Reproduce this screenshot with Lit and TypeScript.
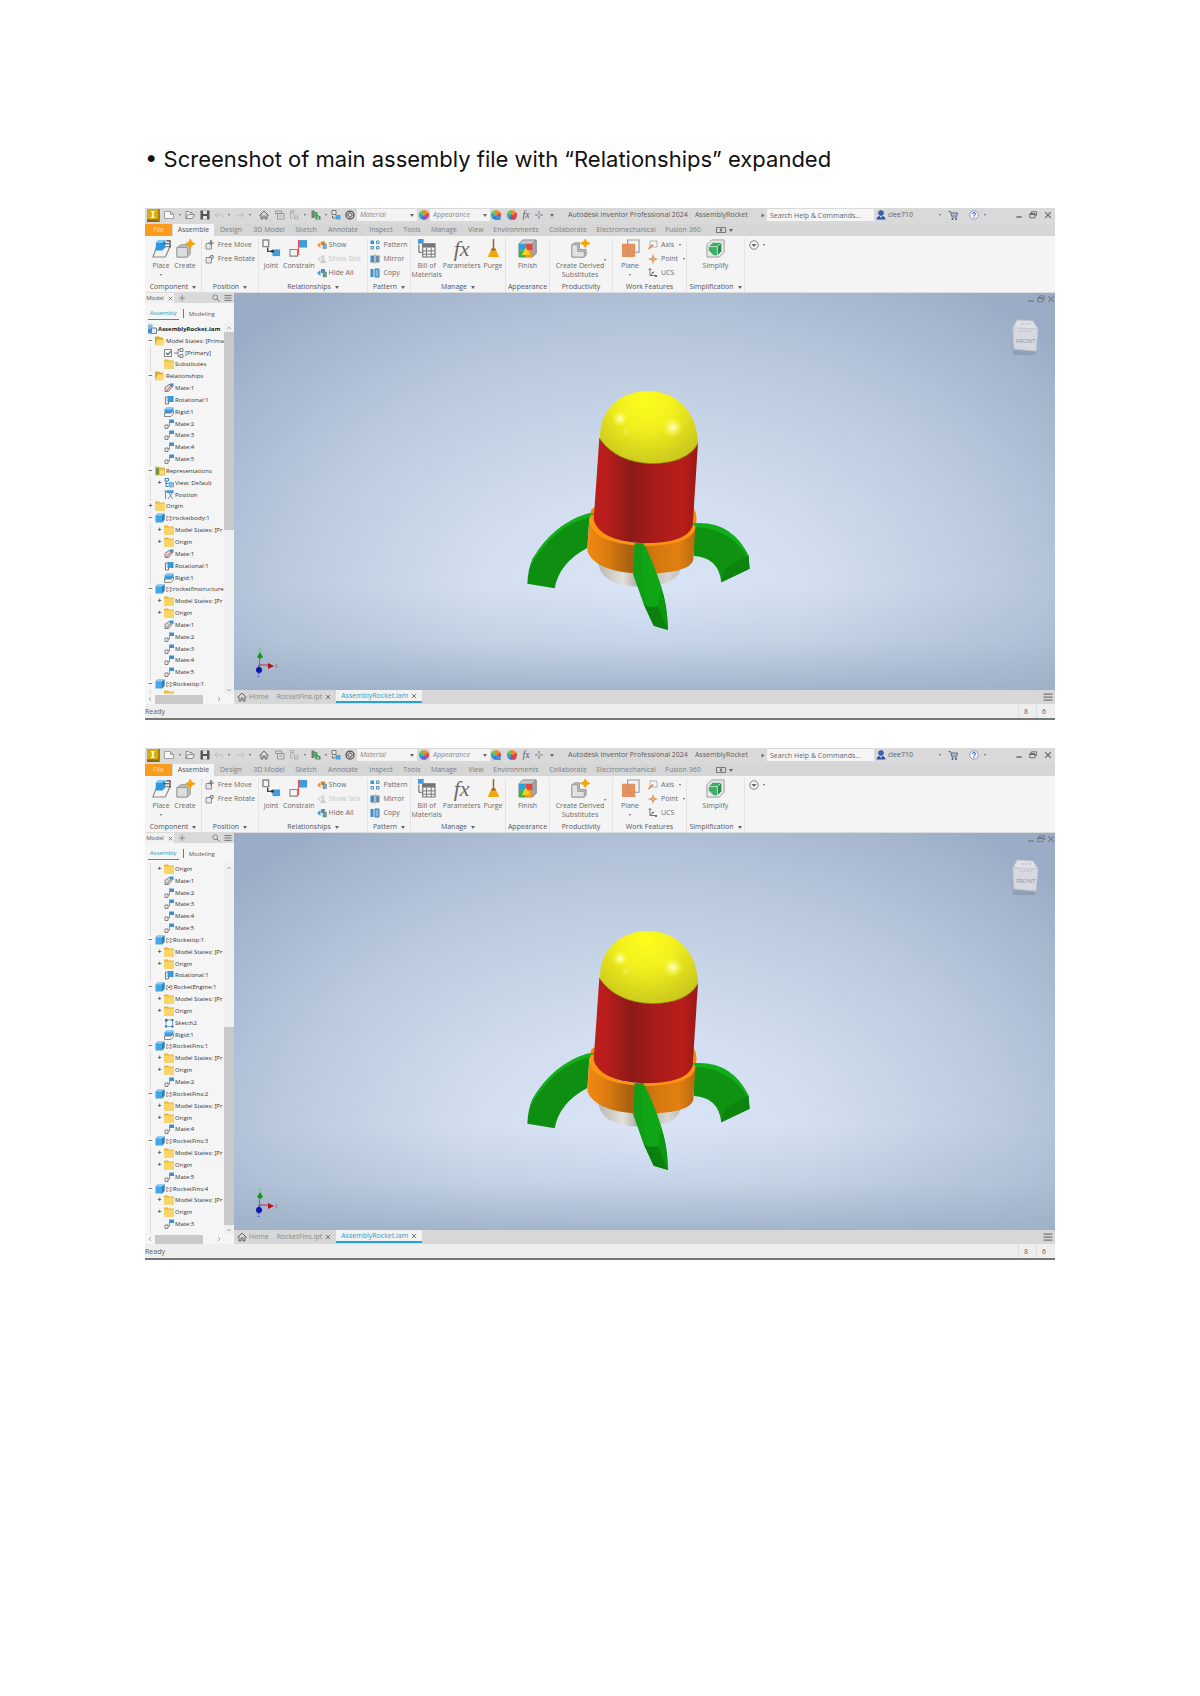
import { LitElement, html, svg, css, nothing } from "lit";
import { customElement, property } from "lit/decorators.js";
import { classMap } from "lit/directives/class-map.js";

type Row = { level: number; icon: string; text: string; open?: boolean; closed?: boolean; bold?: boolean; check?: boolean };

/* ---------- icon artwork, each drawn on a 20 x 20 grid ---------- */
const wheel = svg`
  <path d="M10 10V0A10 10 0 0 1 18.700 5z" fill="#f08a2c"/>
  <path d="M10 10 18.700 5A10 10 0 0 1 18.700 15z" fill="#e8443a"/>
  <path d="M10 10 18.700 15A10 10 0 0 1 10 20z" fill="#9b4fc0"/>
  <path d="M10 10V20A10 10 0 0 1 1.300 15z" fill="#2f7fe0"/>
  <path d="M10 10 1.300 15A10 10 0 0 1 1.300 5z" fill="#27b3a2"/>
  <path d="M10 10 1.300 5A10 10 0 0 1 10 0z" fill="#7ac143"/>`;
const cubeBlue = svg`
  <path d="M1 5 5 1H19V14L14 19H1z" fill="#45a6e6"/>
  <path d="M1 5 5 1H19L14 5z" fill="#8ccbf2"/>
  <path d="M14 5 19 1V14L14 19z" fill="#2c82c2"/>`;
const art: Record<string, unknown> = {
  logo: svg`<path d="M0 0H20V20H0z" fill="#d9ab10"/><path d="M0 16H20V20H0z" fill="#8b6b08"/><path d="M17 0H20V20H17z" fill="#a88308"/><path d="M6 3H12V5H10.500V12H12V14H6V12H7.500V5H6z" fill="#fff6cf"/>`,
  doc: svg`<path d="M1 3H13L19 9V17H1zM13 3V9H19" fill="#fafafa" stroke="#888" stroke-width="1.500"/>`,
  open: svg`<path d="M2 17V3H7L9 5H14V9M2 17 6 9H19L15 17z" fill="#eee" stroke="#777" stroke-width="1.600"/>`,
  save: svg`<path d="M1 1H19V19H1z" fill="#555"/><path d="M6 1H14V8H6zM6 12H14V19H6z" fill="#e4e4e4"/>`,
  undo: svg`<path d="M7 5 2 10 7 15M2 10H14Q18 10 18 14" fill="none" stroke="#bdbdbd" stroke-width="2"/>`,
  redo: svg`<path d="M13 5 18 10 13 15M18 10H6Q2 10 2 14" fill="none" stroke="#bdbdbd" stroke-width="2"/>`,
  home: svg`<path d="M1 11 10 2 19 11M4 9V18H8V12H12V18H16V9" fill="none" stroke="#666" stroke-width="2"/>`,
  sheets: svg`<path d="M1 2H13V7H1zM5 7H18V18H5z" fill="#ddd" stroke="#888" stroke-width="1.600"/><path d="M8 12H15" stroke="#888" stroke-width="1.500"/>`,
  branch: svg`<path d="M3 1H10V5H3zM3 5V16H8M11 12H18V18H11zM6 6 12 12" fill="none" stroke="#aaa" stroke-width="1.800"/>`,
  update: svg`<path d="M1 1H7V16H1z" fill="#777"/><path d="M5 4H13V13H5z" fill="#55a868"/><path d="M11 9 19 13V19H9V13z" fill="#3a9151"/><path d="M14 13V18" stroke="#fff" stroke-width="2"/>`,
  select: svg`<path d="M2 1H10V9H2z" fill="#eee" stroke="#777" stroke-width="2"/><path d="M9 10H19V19H9z" fill="#4ca3df"/><path d="M3 12V16H8" fill="none" stroke="#666" stroke-width="2"/>`,
  gear: svg`<circle cx="10" cy="10" r="8" fill="none" stroke="#555" stroke-width="2.500"/><circle cx="10" cy="10" r="4" fill="none" stroke="#666" stroke-width="2"/><path d="M10 2V6M10 14V18M2 10H6M14 10H18" stroke="#666" stroke-width="1.500"/>`,
  wheel,
  wheelBlue: svg`${wheel}<path d="M10 11H19V20H10z" fill="#3c8fd8"/>`,
  wheelRed: svg`${wheel}<path d="M8 8 19 16 15 20 7 13z" fill="#e23b30"/>`,
  plus: svg`<path d="M10 2V18M2 10H18" stroke="#999" stroke-width="3"/><circle cx="10" cy="10" r="2" fill="#ddd"/>`,
  user: svg`<circle cx="10" cy="6" r="5" fill="#3f63b5" stroke="#233f80"/><path d="M1 19Q2 11 10 12Q18 11 19 19z" fill="#2f51a3"/><path d="M8 12H12L10 17z" fill="#dfe6f7"/>`,
  cart: svg`<path d="M1 3H5L8 14H17L19 6H6" fill="#d5dcea" stroke="#5a6b8c" stroke-width="2"/><path d="M7 8H18M8 11H17" stroke="#5a6b8c"/><circle cx="9" cy="18" r="2" fill="#43577d"/><circle cx="16" cy="18" r="2" fill="#43577d"/>`,
  help: svg`<circle cx="10" cy="10" r="8.500" fill="#f3f6fb" stroke="#7487ad" stroke-width="1.500"/><path d="M7 8Q7 5 10 5Q13 5 13 8Q13 9.500 10 11V13" fill="none" stroke="#2f5fc0" stroke-width="2"/><circle cx="10" cy="15" r="1.200" fill="#2f5fc0"/>`,
  min: svg`<path d="M3 15H17" stroke="#555" stroke-width="3"/>`,
  restore: svg`<path d="M6 6V2H19V11H15M2 7H15V17H2z" fill="none" stroke="#555" stroke-width="2"/><path d="M2 8H15" stroke="#555" stroke-width="3"/>`,
  close: svg`<path d="M3 3 17 17M17 3 3 17" stroke="#666" stroke-width="3"/>`,
  add: svg`<path d="M10 3V17M3 10H17" stroke="#888" stroke-width="2.500"/>`,
  find: svg`<circle cx="8" cy="8" r="6" fill="none" stroke="#777" stroke-width="2"/><path d="M12 12 19 19" stroke="#777" stroke-width="2.500"/>`,
  menu: svg`<path d="M1 4H19M1 10H19M1 16H19" stroke="#777" stroke-width="2.500"/>`,
  camera: svg`<path d="M1 5H19V15H1z" fill="none" stroke="#777" stroke-width="2"/><path d="M10 5V15" stroke="#777" stroke-width="1.500"/><circle cx="10" cy="10" r="2.500" fill="#777"/>`,
  roundDown: svg`<circle cx="10" cy="10" r="8.500" fill="none" stroke="#777" stroke-width="1.800"/><path d="M5 8H15L10 14z" fill="#666"/>`,
  place: svg`<path d="M5 8H19L14 19H1z" fill="#f4f4f4" stroke="#888" stroke-width="1.200"/><path d="M4 4 7 1H14V9L11 12H4z" fill="#2f97dd"/><path d="M4 4 7 1H14L11 4z" fill="#84c8f1"/><path d="M15 2H19V9M12 5H18" stroke="#444" fill="none" stroke-width="1.300"/>`,
  create: svg`<path d="M1 9 5 6H15V16L12 19H1z" fill="#bdbdbd" stroke="#999"/><path d="M1 9H12V19H1z" fill="#dedede" stroke="#999"/><path d="M15 0 16.500 3.500 20 5 16.500 6.500 15 10 13.500 6.500 10 5 13.500 3.500z" fill="#f5a400" stroke="#f5a400"/>`,
  move: svg`<path d="M2 7H13V18H2z" fill="#e6e6e6" stroke="#888" stroke-width="1.800"/><path d="M12 1V11M7 6H18" stroke="#666" stroke-width="2"/><path d="M9 3 12 0 15 3z" fill="#666"/>`,
  rotate: svg`<path d="M2 7H13V18H2z" fill="#e6e6e6" stroke="#888" stroke-width="1.800"/><path d="M9 8Q9 2 16 3Q18 8 13 11" fill="none" stroke="#666" stroke-width="2"/>`,
  joint: svg`<path d="M1 1H7V8H1z" fill="#f4f4f4" stroke="#888" stroke-width="1.500"/><path d="M6 9V13H11" fill="none" stroke="#444" stroke-width="1.500"/><path d="M11 11H19V18H11z" fill="#3f9ddd"/><circle cx="11" cy="13" r="1.600" fill="#333"/>`,
  constrain: svg`<path d="M10 1H19V9H10z" fill="#3f9ddd"/><path d="M1 11H9V18H1z" fill="#f4f4f4" stroke="#888" stroke-width="1.200"/><path d="M10 1V17" stroke="#e8504f" stroke-width="1.200"/>`,
  show: svg`<path d="M0 10 7 4V16z" fill="#e99a3c"/><path d="M8 3H16V10H8z" fill="#d8852d"/><path d="M12 8H19V17H12z" fill="#68aedc" stroke="#777"/>`,
  sick: svg`<path d="M0 10 7 4V16z" fill="#ddd"/><path d="M8 3H15V9H8z" fill="#d5d5d5"/><path d="M12 8 19 18H6z" fill="#ccc"/>`,
  hide: svg`<path d="M0 10 7 4V16z" fill="#3f9ddd"/><path d="M8 2H16V10H8z" fill="#5b8fb5"/><path d="M12 8H19V18H12z" fill="#57a6a6" stroke="#777"/>`,
  pattern: svg`<path d="M1 1H8V8H1z" fill="#2f97dd"/><path d="M13 2H18V7H13zM2 13H7V18H2zM13 13H18V18H13z" fill="#eee" stroke="#4b8fc0" stroke-width="2"/>`,
  mirror: svg`<path d="M1 3H8V17H1z" fill="#3f8fc7"/><path d="M10 1V19" stroke="#555" stroke-width="1.500"/><path d="M12 3H19V17H12z" fill="#6b8eab"/>`,
  copy: svg`<path d="M1 2H7V18H1z" fill="#3f8fc7"/><path d="M10 2H18V18H10z" fill="#8db9d9" stroke="#2e7fb8" stroke-width="2"/>`,
  bom: svg`<path d="M6 5H19V19H6z" fill="#f1f1f1" stroke="#777" stroke-width="1.200"/><path d="M6 5H19V9H6z" fill="#777"/><path d="M6 12.500H19M6 16H19M10 9V19M15 9V19" stroke="#777"/><path d="M1 0H7V5H1z" fill="#3f9ddd"/><path d="M2 6V14H5" fill="none" stroke="#555"/>`,
  purge: svg`<path d="M10 0V10" stroke="#9a6530" stroke-width="1.600"/><path d="M8 10H12L16 19H4z" fill="#f2a70a"/><path d="M8 10H12V12H8z" fill="#7a5a3a"/>`,
  finish: svg`<path d="M1 5 5 1H19V15L15 19H1z" fill="#c9c9c9" stroke="#888"/><path d="M15 5 19 1V15L15 19z" fill="#a9a9a9" stroke="#888"/><path d="M1 5H8V12H1z" fill="#27a6de"/><path d="M8 5H15V12H8z" fill="#e5483c"/><path d="M1 12H8V19H1z" fill="#3bb34b"/><path d="M8 12H15V19H8z" fill="#f59a1f"/><path d="M4 17 8 9 13 16z" fill="#f7d21b"/>`,
  derived: svg`<path d="M1 6 4 4H9V11H16V17L14 19H1z" fill="#bdbdbd" stroke="#999"/><path d="M1 6H7V13H14V19H1z" fill="#e2e2e2" stroke="#999"/><path d="M15 0 16.500 3 20 4.500 16.500 6 15 9 13.500 6 10 4.500 13.500 3z" fill="#f5a400" stroke="#f5a400"/>`,
  plane: svg`<path d="M7 1H19V14H7z" fill="none" stroke="#999" stroke-width="1.200"/><path d="M1 5H15V19H1z" fill="#df8a55" opacity=".92"/>`,
  axis: svg`<path d="M4 2H18V14H4z" fill="none" stroke="#aaa" stroke-width="1.800"/><path d="M1 18 10 9" stroke="#df7d3f" stroke-width="3"/>`,
  point: svg`<path d="M10 1V19M1 10H19" stroke="#df8a4f" stroke-width="1.800"/><path d="M10 5 15 10 10 15 5 10z" fill="#f0b184" stroke="#cf6f2f" stroke-width="1.500"/>`,
  ucs: svg`<path d="M4 1V15H18M4 15 12 7M1 4 4 1 7 4" fill="none" stroke="#666" stroke-width="1.800"/><path d="M8 8H11V11H8zM14 14H18V18H14z" fill="#666"/>`,
  simplify: svg`<path d="M1 6 6 1H19V14L14 19H1z" fill="#e9e9e9" stroke="#999"/><path d="M3 8 7 4H16V13L12 17H8L3 12z" fill="#3cae66"/><path d="M12 8 16 4V13L12 17z" fill="#2b8c4e"/><path d="M3 8H12V17M12 8 16 4" fill="none" stroke="#bfe6cc"/>`,
  iam: svg`<path d="M2 1H11V9H2z" fill="#8ab8da"/><path d="M2 9H9V19H2z" fill="#3f8fc7"/><path d="M9 8H19V19H9z" fill="#dfe9f1" stroke="#5e88aa" stroke-width="2"/>`,
  folder: svg`<path d="M0 1H8L10 3H20V19H0z" fill="#e9b83a"/><path d="M0 5H20V19H0z" fill="#f8d566"/>`,
  folderOpen: svg`<path d="M0 1H8L10 3H16V18H0z" fill="#dba92e"/><path d="M5 7H20L16 19H0z" fill="#fbd96c"/>`,
  reps: svg`<path d="M0 1H8L10 3H20V19H0z" fill="#e0bd45"/><path d="M2 4H8V17H2z" fill="#7c8b45"/><path d="M9 9H18V17H9z" fill="#f3dd8a"/>`,
  states: svg`<path d="M0 10H8M8 10V3H12M8 10V17H12" fill="none" stroke="#777" stroke-width="1.800"/><path d="M12 1H18V7H12zM12 13H18V19H12z" fill="#eee" stroke="#777" stroke-width="1.800"/>`,
  mateAxis: svg`<path d="M2 9 10 3H14L18 6 9 17H2z" fill="#d9d9d9" stroke="#777" stroke-width="1.800"/><path d="M12 1H19V7H12z" fill="#3f8fd0"/><path d="M5 16 14 6" stroke="#de5b5b" stroke-width="2"/>`,
  mate: svg`<path d="M12 1H20V8H12z" fill="#3f8fd0"/><path d="M11 1V14H8" fill="none" stroke="#e86a6a" stroke-width="2"/><path d="M2 12H8V19H2z" fill="#f5f5f5" stroke="#777" stroke-width="1.800"/>`,
  rotational: svg`<path d="M7 2H19V14H7z" fill="#2f93d8"/><path d="M7 4H3V18H9V14" fill="none" stroke="#777" stroke-width="2"/><path d="M12 2V14" stroke="#7cc4f0" stroke-width="1"/>`,
  rigid: svg`<path d="M1 5 5 1H19V8L14 12H1z" fill="#3a9fe2"/><path d="M1 5 5 1H19L15 5z" fill="#8bcdf3"/><path d="M1 12H14L19 8V13L14 19H1z" fill="#f5f5f5" stroke="#666" stroke-width="1.500"/>`,
  part: cubeBlue,
  view: svg`<path d="M2 1H9V6H2zM4 6V17H9M4 11H9" fill="none" stroke="#3b87bd" stroke-width="2"/><path d="M10 9H19V18H10z" fill="#8cbfe2" stroke="#3b87bd"/>`,
  position: svg`<path d="M1 2H19M3 2V18M10 5 17 18M17 5 8 18" fill="none" stroke="#6d8da6" stroke-width="2"/><path d="M5 1H19V6H5z" fill="#4b9bd2"/>`,
  sketch: svg`<path d="M4 4H17V17H4z" fill="#f7f7f7" stroke="#3f8fd0" stroke-width="1.500"/><path d="M2 2H7V7H2zM15 2H19V6H15zM15 15H19V19H15zM2 15H6V19H2z" fill="#3a6f99"/>`,
};
const icon = (name: string, cls = "i10") => svg`<svg class=${cls} viewBox="0 0 20 20" aria-hidden="true">${art[name]}</svg>`;
const caret = html`<span class="caret"></span>`;

@customElement("model-scene")
class ModelScene extends LitElement {
  static styles = css`
    :host { display: block; height: 100%; overflow: hidden;
      background:
        linear-gradient(to bottom, rgba(159,178,200,0) 74%, rgba(157,176,199,.3) 88%, rgba(155,174,197,.85) 100%),
        radial-gradient(ellipse 68% 100% at 50% 80%, #dae5f7 0%, #d3dff0 30%, #bac9dd 66%, #9badc6 100%);
    }
    .scene { display: block; width: 100%; height: 100%; font-family: "Open Sans", sans-serif; }
    .face { font-size: 6px; fill: #8f949c; }
    .axis { font-size: 5px; }
  `;
  render() {
    return html`<svg class="scene" viewBox="0 0 821 397" preserveAspectRatio="xMidYMid meet" role="img" aria-label="Rocket assembly">
      <defs>
        <linearGradient id="red"><stop offset="0" stop-color="#bd1d1d"/><stop offset=".12" stop-color="#b81e1c"/><stop offset=".36" stop-color="#8d1a16"/><stop offset=".6" stop-color="#a91b18"/><stop offset=".85" stop-color="#b71e1a"/><stop offset="1" stop-color="#9b1815"/></linearGradient>
        <linearGradient id="ring"><stop offset="0" stop-color="#f28a12"/><stop offset=".2" stop-color="#d97a0f"/><stop offset=".4" stop-color="#a75f10"/><stop offset=".62" stop-color="#d3770f"/><stop offset=".85" stop-color="#e27f10"/><stop offset="1" stop-color="#b86a10"/></linearGradient>
        <radialGradient id="dome" gradientUnits="userSpaceOnUse" cx="440" cy="90" r="210"><stop offset="0" stop-color="#fdfd1c"/><stop offset=".4" stop-color="#f3f01e"/><stop offset=".75" stop-color="#d8d61c"/><stop offset="1" stop-color="#c6c41c"/></radialGradient>
        <radialGradient id="shine"><stop offset="0" stop-color="#fffff0"/><stop offset=".3" stop-color="#ffff9c" stop-opacity=".7"/><stop offset="1" stop-color="#ffff40" stop-opacity="0"/></radialGradient>
        <linearGradient id="nozzle"><stop offset="0" stop-color="#b9b7b3"/><stop offset=".3" stop-color="#e3e1dc"/><stop offset=".5" stop-color="#aaa7a0"/><stop offset=".85" stop-color="#d8d6d2"/><stop offset="1" stop-color="#c0beb9"/></linearGradient>
        <linearGradient id="shade" x2="0" y2="1"><stop offset="0" stop-color="#7e8ea8" stop-opacity="0"/><stop offset="1" stop-color="#7e8ea8" stop-opacity=".6"/></linearGradient>
      </defs>
      <g transform="translate(266 77) scale(.3333)">
        <path d="M272 436Q268 418 284 412H578Q594 430 588 462z" fill="#f0870f"/>
        <path d="M294 570Q296 648 420 650Q540 646 542 590z" fill="url(#nozzle)"/>
        <path d="M282 430 262 431Q160 462 98 566Q84 596 82 641L164 655Q178 578 262 534L268 446z" fill="#0f8f12"/>
        <path d="M282 430 262 431Q160 462 98 566L90 590Q160 468 268 442L282 441z" fill="#13b01c"/>
        <path d="M574 468 588 462Q690 462 742 550L749 596 664 637Q656 562 582 558z" fill="#0f920f"/>
        <path d="M574 468V460Q696 448 747 560L744 564Q690 474 582 470z" fill="#12ad1a"/>
        <path d="M749 596 746 556 676 594 664 637z" fill="#0d840d"/>
        <path d="M268 444Q276 520 430 522Q570 518 586 472L580 570Q570 610 425 612Q285 606 262 544z" fill="url(#ring)"/>
        <path d="M268 446Q276 424 284 440Q300 516 430 520Q566 514 580 462L587 470Q580 526 430 528Q270 520 268 446z" fill="#fb9413"/>
        <path d="M298 205 594 220 578 468Q560 520 430 520Q300 514 281 450z" fill="url(#red)"/>
        <path d="M300 208C298 110 370 62 446 63C532 64 594 130 594 222Q560 280 456 281Q350 278 300 208z" fill="url(#dome)"/>
        <path d="M298 205Q350 278 456 281Q560 280 594 220" fill="none" stroke="#8e7a14" stroke-width="2"/>
        <circle cx="360" cy="146" r="24" fill="url(#shine)"/><circle cx="518" cy="172" r="32" fill="url(#shine)"/><circle cx="378" cy="184" r="16" fill="url(#shine)" opacity=".35"/>
        <path d="M404 520H430Q452 560 470 610Q502 690 504 780L461 767 432 704 400 614z" fill="#10a516"/>
        <path d="M404 520 400 614 432 704 440 708Q420 600 430 520z" fill="#0e9413" opacity=".4"/>
        <path d="M432 704Q456 716 474 708L504 780 461 767z" fill="#0c800f"/>
        <path d="M474 708 484 654Q502 700 504 780z" fill="#0d970f"/>
      </g>
      <g>
        <path d="M777 44H805L801 62H779z" fill="url(#shade)"/>
        <path d="M783 27 799 28 804 36 779 35z" fill="#dde0e6" stroke="#c3c7ce"/>
        <path d="M779 35 804 36 802 58 780 56z" fill="#d6d9df" stroke="#c3c7ce"/>
        <text class="face" x="782" y="50">FRONT</text><path d="M787 31H797M785 38H798" stroke="#b9bdc5" stroke-dasharray="3 1"/>
      </g>
      <g>
        <path d="M25.500 372V364" stroke="#3a9a4a"/><path d="M25.500 372H34" stroke="#b3324a"/><path d="M25 372V377" stroke="#2020b0"/>
        <path d="M26 359 29 364 26 366 23 364z" fill="#0c9a1b"/><path d="M34 370 40 373 34 376z" fill="#b50f1f"/><circle cx="25" cy="377" r="3" fill="#0d12b0"/>
        <text class="axis" x="24" y="359" fill="#3cc94e">Y</text><text class="axis" x="41" y="375" fill="#e0394a">X</text><text class="axis" x="23" y="384" fill="#3a46e0">Z</text>
      </g>
    </svg>`;
  }
}

@customElement("inventor-window")
class InventorWindow extends LitElement {
  @property({ attribute: false }) rows: Row[] = [];
  @property({ type: Boolean }) scrolled = false;

  static styles = css`
    :host { display: block; font: 7px/10px "Open Sans", "Noto Sans", sans-serif; color: #5c5c5c; }
    * { box-sizing: border-box; }
    button, input, select { font: inherit; color: inherit; border: 0; padding: 0; margin: 0; background: none; min-width: 0; border-radius: 0; }
    button { display: flex; align-items: center; justify-content: center; white-space: nowrap; }
    a { color: inherit; text-decoration: none; }
    svg { flex: none; display: block; }
    .i5 { width: 5px; height: 5px; } .i8 { width: 8px; height: 8px; } .i10 { width: 10px; height: 10px; } .i12 { width: 13px; height: 13px; } .i20 { width: 19px; height: 19px; }
    .caret { flex: none; width: 0; height: 0; border: 2px solid transparent; border-top: 3px solid #666; border-bottom: 0; }
    .tiny { border-width: 1px; border-top-width: 2px; border-bottom: 0; }
    .side { transform: rotate(-90deg); }
    .win { display: flex; flex-direction: column; background: #f4f4f4; border-bottom: 2px solid #777; overflow: hidden; }

    .title { display: grid; height: 16px; align-items: center; background: #d9d9d9; padding-bottom: 2px;
      grid-template-columns: 16px 16px 5px 15px 15px 13px 8px 13px 8px 20px 12px 15px 8px 13px 7px 14px 14px 60px 13px 60px 12px 19px 10px 16px 10px minmax(0, 1fr) 8px 107px 14px 47px 10px 16px 5px 15px 8px 23px 14px 14px 15px; }
    .title > * { justify-self: center; }
    .title > .fill { justify-self: stretch; }
    .pick { display: flex; align-items: center; background: #f3f3f3; height: 12px; padding-right: 3px; }
    .pick select { appearance: none; flex: 1; font-style: italic; color: #8a8a8a; padding-left: 3px; height: 12px; }
    .fx { font: italic 10px/10px "Liberation Serif", serif; }
    .name { display: flex; justify-content: center; gap: 7px; white-space: nowrap; }
    .search { background: #f5f5f5; height: 12px; padding: 0 3px; }
    .search::placeholder { color: #666; opacity: 1; }
    .title > .user { justify-self: start; }

    .tabs { display: grid; height: 12px; background: #d6d6d6; color: #808080; padding-right: 8px; align-items: stretch;
      grid-template-columns: 27px 42px 34px 42px 32px 42px 34px 28px 36px 28px 52px 52px 64px 50px 32px; }
    .tabs .file { background: #f99b1c; color: #ffe3b5; }
    .tabs .on { background: #f4f4f4; color: #555; margin-left: 1px; }
    .tabs button { gap: 3px; }

    .ribbon { display: flex; height: 57px; padding-top: 2px; border-bottom: 1px solid #dcdcdc; color: #6a6a6a; }
    .group { display: flex; flex-direction: column; flex: none; border-right: 1px solid #e4e4e4; }
    .tools { display: flex; flex: 1; justify-content: center; }
    .caption { display: flex; height: 10px; gap: 4px; align-items: center; justify-content: center; white-space: nowrap; color: #555; }
    .g57 { width: 57px; } .g109 { width: 109px; } .g43 { width: 43px; } .g95 { width: 95px; } .g44 { width: 44px; } .g63 { width: 63px; } .g74 { width: 74px; } .g58 { width: 58px; }
    .big { flex-direction: column; justify-content: flex-start; gap: 3px; min-width: 24px; line-height: 9px; padding-top: 1px; }
    .big .caret { margin-top: 1px; }
    .big .fx { font-size: 22px; line-height: 19px; height: 19px; }
    .g95 .big { padding-left: 1px; padding-right: 1px; }
    .wide { min-width: 32px; }
    .stack { display: flex; flex-direction: column; }
    .stack button { height: 14px; gap: 3px; justify-content: flex-start; }
    .stack .caret { margin-left: 2px; }
    .stack.pad { padding-left: 2px; }
    .g109 .tools { justify-content: flex-start; }
    .g109 .stack button { gap: 2px; }
    .lower { display: flex; align-items: center; }
    .dim { color: #c4c4c4; }
    .more { display: flex; gap: 4px; align-items: center; height: 13px; padding-left: 4px; }

    .body { display: grid; grid-template-columns: 89px minmax(0, 1fr); height: 411px; }
    .browser { display: flex; flex-direction: column; min-width: 0; background: #f5f5f5; font-size: 6px; }
    .btabs { display: flex; height: 10px; background: #d9d9d9; align-items: center; gap: 4px; padding-right: 2px; }
    .btabs .model { background: #f0f0f0; width: 29px; gap: 4px; height: 10px; }
    .btabs .push { flex: 1; }
    .modes { display: flex; height: 20px; padding: 4px 3px 3px; align-items: stretch; }
    .modes button { padding: 0 2px; }
    .modes .on { color: #1a9dbd; border-bottom: 1px solid #1a9dbd; }
    .modes i { width: 1px; background: #777; margin: 2px 3px 2px 4px; }
    .pane { display: flex; height: 371px; }
    .tree { flex: 1; min-width: 0; overflow: hidden; display: grid; grid-template-rows: repeat(31, minmax(0, 1fr)) 4px; color: #333;
      background: linear-gradient(#ddd, #ddd) 5px 0 / 1px 100% no-repeat; }
    .row { display: flex; align-items: center; gap: 1px; min-width: 0; min-height: 0; white-space: nowrap; padding-left: 2px; }
    .tail { overflow: hidden; align-items: flex-start; }
    .l2 { padding-left: 11px; }
    .exp { width: 7px; height: 10px; flex: none; color: #555; font: bold 7px/10px "Open Sans", sans-serif; background: #f5f5f5; }
    .l0 .exp { display: none; }
    .bold { font-weight: 700; color: #222; }
    .row input { appearance: none; width: 8px; height: 8px; border: 1px solid #888; flex: none; display: grid; place-items: center; margin-right: 1px; }
    .row input:checked::after { content: ""; width: 4px; height: 2px; border: solid #555; border-width: 0 0 1px 1px; transform: rotate(-45deg); }
    .vbar { width: 10px; background: #f0f0f0; display: flex; flex-direction: column; align-items: center; justify-content: space-between; }
    .vbar .thumb { width: 10px; height: 198px; background: #c9c9c9; }
    .vbar .rest { flex: 1; }
    .arrow { width: 10px; height: 9px; color: #999; }
    .arrow svg { width: 6px; height: 6px; fill: none; stroke: #aaa; stroke-width: 1; }
    .hbar { display: flex; height: 10px; align-items: center; padding-right: 10px; }
    .hbar .thumb { width: 48px; height: 9px; background: #c9c9c9; margin-right: 11px; }

    .main { display: flex; flex-direction: column; min-width: 0; }
    .view { position: relative; flex: 1; min-height: 0; }
    .mdi { position: absolute; top: 2px; right: 0; display: flex; gap: 2px; opacity: .65; }
    .docs { display: flex; height: 14px; background: #d7d7d7; align-items: stretch; color: #8c8c8c; }
    .docs a, .docs .doc { display: flex; align-items: center; gap: 2px; padding: 0 3px; }
    .docs .doc { padding: 0 5px; gap: 3px; }
    .docs .doc svg { width: 6px; height: 6px; }
    .docs .on { background: #f2f2f2; color: #2aa0c8; border-bottom: 2px solid #28a4cc; margin-bottom: 1px; }
    .docs .push { flex: 1; }
    .docs .last { padding: 0 2px; }
    .status { display: flex; height: 14px; background: #eee; align-items: stretch; justify-content: flex-end; line-height: 16px; padding-right: 1px; }
    .status p { margin: 0; flex: 1; }
    .status span { width: 18px; text-align: center; border-left: 1px solid #ddd; padding-right: 3px; }
  `;

  private tb(name: string, label: string) { return html`<button aria-label=${label}>${icon(name)}</button>`; }
  private drop(label: string) { return html`<button aria-label=${label}><span class="caret tiny"></span></button>`; }
  private big(name: string, lines: string[], drop = false, wide = false) {
    return html`<button class=${classMap({ big: true, wide })}>
      ${name === "fx" ? html`<span class="fx">fx</span>` : icon(name, "i20")}
      <span>${lines.map((l, i) => html`${i ? html`<br>` : nothing}${l}`)}</span>${drop ? html`<span class="caret tiny"></span>` : nothing}</button>`;
  }
  private small(name: string, text: string, drop = false, dim = false) {
    return html`<button class=${classMap({ dim })}>${icon(name)}<span>${text}</span>${drop ? html`<span class="caret tiny"></span>` : nothing}</button>`;
  }
  private group(cls: string, caption: string, drop: boolean, content: unknown) {
    return html`<section class="group ${cls}" aria-label=${caption}><div class="tools">${content}</div><div class="caption">${caption}${drop ? caret : nothing}</div></section>`;
  }
  private row(r: Row) {
    return html`<div class="row l${r.level} ${r.text ? "" : "tail"}" role="treeitem">
      ${r.open || r.closed ? html`<button class="exp" aria-label="Toggle ${r.text}">${r.open ? "−" : "+"}</button>` : html`<span class="exp"></span>`}
      ${r.check ? html`<input type="checkbox" checked aria-label=${r.text}>` : nothing}
      ${icon(r.icon)}<span class=${classMap({ bold: !!r.bold })}>${r.text}</span></div>`;
  }
  private arrow(d: string, label: string) {
    return html`<button class="arrow" aria-label=${label}><svg viewBox="0 0 6 6"><path d=${d}/></svg></button>`;
  }

  render() {
    const tabs = ["Design", "3D Model", "Sketch", "Annotate", "Inspect", "Tools", "Manage", "View", "Environments", "Collaborate", "Electromechanical", "Fusion 360"];
    return html`<div class="win">
      <header class="title">
        <button aria-label="Inventor">${icon("logo", "i12")}</button>
        ${this.tb("doc", "New")}${this.drop("New options")}${this.tb("open", "Open")}${this.tb("save", "Save")}
        ${this.tb("undo", "Undo")}${this.drop("Undo list")}${this.tb("redo", "Redo")}${this.drop("Redo list")}
        ${this.tb("home", "Home")}${this.tb("sheets", "Windows")}${this.tb("branch", "Return")}${this.drop("Return options")}
        ${this.tb("update", "Update")}${this.drop("Update options")}${this.tb("select", "Select")}${this.tb("gear", "Settings")}
        <span class="pick fill"><select aria-label="Material"><option>Material</option></select>${caret}</span>
        ${this.tb("wheel", "Material browser")}
        <span class="pick fill"><select aria-label="Appearance"><option>Appearance</option></select>${caret}</span>
        ${this.tb("wheelBlue", "Adjust")}${this.tb("wheelRed", "Clear")}<button class="fx" aria-label="Parameters">fx</button>${this.tb("plus", "Add")}<button aria-label="Customize">${caret}</button>
        <span class="name fill"><span>Autodesk Inventor Professional 2024</span><span>AssemblyRocket</span></span>
        <button aria-label="Expand search"><span class="caret side"></span></button>
        <input class="search fill" type="search" placeholder="Search Help &amp; Commands..." aria-label="Search Help and Commands">
        ${this.tb("user", "Account")}<button class="user">clee710</button>${this.drop("Account menu")}
        ${this.tb("cart", "Store")}<span></span>${this.tb("help", "Help")}${this.drop("Help menu")}<span></span>
        <button aria-label="Minimize">${icon("min", "i8")}</button>
        <button aria-label="Restore">${icon("restore", "i8")}</button><button aria-label="Close">${icon("close", "i8")}</button>
      </header>
      <nav class="tabs">
        <button class="file">File</button><button class="on">Assemble</button>
        ${tabs.map((t) => html`<button>${t}</button>`)}<button aria-label="Display">${icon("camera")}${caret}</button>
      </nav>
      <div class="ribbon">
        ${this.group("g57", "Component", true, html`${this.big("place", ["Place"], true)}${this.big("create", ["Create"])}`)}
        ${this.group("g57", "Position", true, html`<div class="stack">${this.small("move", "Free Move")}${this.small("rotate", "Free Rotate")}</div>`)}
        ${this.group("g109", "Relationships", true, html`${this.big("joint", ["Joint"])}${this.big("constrain", ["Constrain"])}
          <div class="stack pad">${this.small("show", "Show")}${this.small("sick", "Show Sick", false, true)}${this.small("hide", "Hide All")}</div>`)}
        ${this.group("g43", "Pattern", true, html`<div class="stack">${this.small("pattern", "Pattern")}${this.small("mirror", "Mirror")}${this.small("copy", "Copy")}</div>`)}
        ${this.group("g95", "Manage", true, html`${this.big("bom", ["Bill of", "Materials"])}${this.big("fx", ["Parameters"])}${this.big("purge", ["Purge"])}`)}
        ${this.group("g44", "Appearance", false, this.big("finish", ["Finish"]))}
        ${this.group("g63", "Productivity", false, html`${this.big("derived", ["Create Derived", "Substitutes"])}<span class="lower"><span class="caret tiny"></span></span>`)}
        ${this.group("g74", "Work Features", false, html`${this.big("plane", ["Plane"], true, true)}
          <div class="stack pad">${this.small("axis", "Axis", true)}${this.small("point", "Point", true)}${this.small("ucs", "UCS")}</div>`)}
        ${this.group("g58", "Simplification", true, this.big("simplify", ["Simplify"]))}
        <button class="more" aria-label="Ribbon options">${icon("roundDown")}<span class="caret tiny"></span></button>
      </div>
      <div class="body">
        <aside class="browser">
          <div class="btabs"><button class="model">Model ${icon("close", "i5")}</button><button aria-label="Add tab">${icon("add", "i8")}</button><span class="push"></span>
            <button aria-label="Find">${icon("find", "i8")}</button><button aria-label="Menu">${icon("menu", "i8")}</button></div>
          <div class="modes"><button class="on">Assembly</button><i></i><button>Modeling</button></div>
          <div class="pane">
            <div class="tree" role="tree">${this.rows.map((r) => this.row(r))}</div>
            <div class="vbar">${this.arrow("M1 4 3 2 5 4", "Scroll up")}${this.scrolled ? html`<span class="rest"></span><span class="thumb"></span>` : html`<span class="thumb"></span><span class="rest"></span>`}${this.arrow("M1 2 3 4 5 2", "Scroll down")}</div>
          </div>
          <div class="hbar">${this.arrow("M4 1 2 3 4 5", "Scroll left")}<span class="thumb"></span>${this.arrow("M2 1 4 3 2 5", "Scroll right")}</div>
        </aside>
        <div class="main">
          <div class="view"><model-scene></model-scene>
            <div class="mdi"><button aria-label="Minimize document">${icon("min", "i8")}</button><button aria-label="Restore document">${icon("restore", "i8")}</button><button aria-label="Close document">${icon("close", "i8")}</button></div></div>
          <nav class="docs">
            <a href="#home">${icon("home")}Home</a>
            <button class="doc">RocketFins.ipt ${icon("close")}</button>
            <button class="doc on">AssemblyRocket.iam ${icon("close")}</button>
            <span class="push"></span><button class="last" aria-label="Document list">${icon("menu")}</button>
          </nav>
        </div>
      </div>
      <footer class="status"><p>Ready</p><span>8</span><span>6</span></footer>
    </div>`;
  }
}

const folder = (text: string, level = 2): Row => ({ level, icon: "folder", text, closed: true });
const mate = (n: number): Row => ({ level: 2, icon: n === 1 ? "mateAxis" : "mate", text: `Mate:${n}` });
const rotational: Row = { level: 2, icon: "rotational", text: "Rotational:1" };
const rigid: Row = { level: 2, icon: "rigid", text: "Rigid:1" };
const part = (text: string): Row => ({ level: 1, icon: "part", text, open: true });
const inner = [folder("Model States: [Pr"), folder("Origin")];

const topRows: Row[] = [
  { level: 0, icon: "iam", text: "AssemblyRocket.iam", bold: true },
  { level: 1, icon: "folderOpen", text: "Model States: [Prima", open: true },
  { level: 2, icon: "states", text: "[Primary]", check: true },
  { level: 2, icon: "folder", text: "Substitutes" },
  { level: 1, icon: "folderOpen", text: "Relationships", open: true },
  mate(1), rotational, rigid, mate(2), mate(3), mate(4), mate(5),
  { level: 1, icon: "reps", text: "Representations", open: true },
  { level: 2, icon: "view", text: "View: Default", closed: true },
  { level: 2, icon: "position", text: "Position" },
  folder("Origin", 1),
  part("[:]:rocketbody:1"), ...inner, mate(1), rotational, rigid,
  part("[:]:rocketfinstructure"), ...inner, mate(1), mate(2), mate(3), mate(4), mate(5),
  part("[:]:Rockettip:1"),
  { level: 2, icon: "folder", text: "" },
];
const bottomRows: Row[] = [
  folder("Origin"), mate(1), mate(2), mate(3), mate(4), mate(5),
  part("[:]:Rockettip:1"), ...inner, rotational,
  part("[▪]:RocketEngine:1"), ...inner, { level: 2, icon: "sketch", text: "Sketch2" }, rigid,
  part("[:]:RocketFins:1"), ...inner, mate(2),
  part("[:]:RocketFins:2"), ...inner, mate(4),
  part("[:]:RocketFins:3"), ...inner, mate(5),
  part("[:]:RocketFins:4"), ...inner, mate(3),
];

@customElement("app-root")
class AppRoot extends LitElement {
  static styles = css`
    :host { display: block; min-height: 100vh; background: #fff; }
    .page { display: flex; flex-direction: column; gap: 28px; padding: 144px 145px; }
    .heading { margin: 0 0 6px; font: 400 22px/30px Inter, "Liberation Sans", sans-serif; color: #111; }
  `;
  render() {
    return html`<main class="page">
      <h1 class="heading">• Screenshot of main assembly file with “Relationships” expanded</h1>
      <inventor-window .rows=${topRows}></inventor-window>
      <inventor-window .rows=${bottomRows} scrolled></inventor-window>
    </main>`;
  }
}
